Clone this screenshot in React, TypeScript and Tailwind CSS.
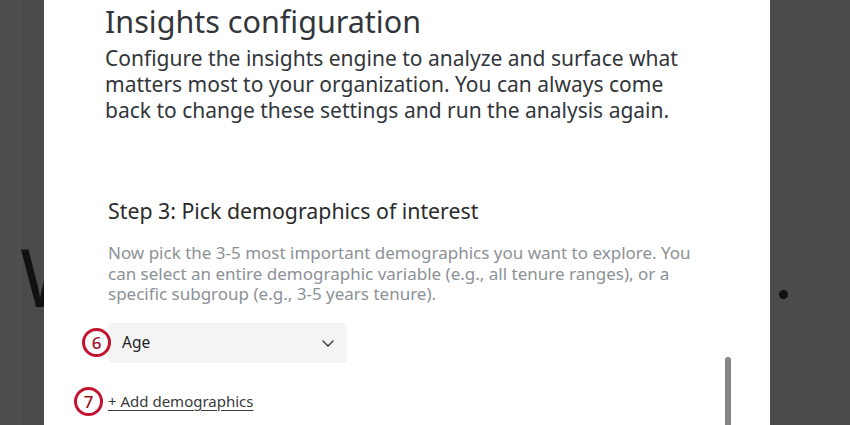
import React from "react";

function Badge({ n }: { n: string }) {
  return (
    <span className="relative z-10 flex h-[29px] w-[29px] shrink-0 items-center justify-center rounded-full border-[3px] border-[#c3142f] bg-white text-[17px] font-medium leading-none text-[#a0102a]">
      {n}
    </span>
  );
}

export default function App() {
  return (
    <div
      className="relative h-[425px] w-[850px] overflow-hidden bg-[#4b4b4b]"
      style={{ fontFamily: '"Noto Sans", "Open Sans", sans-serif' }}
    >
      <div className="absolute left-0 top-0 h-full w-[22px] bg-[#4e4e4e]" />
      <span className="absolute left-[20px] top-[236px] text-[80px] font-normal leading-none text-[#111]">
        W
      </span>
      <span className="absolute left-[779px] top-[290px] h-[9px] w-[9px] rounded-full bg-[#111]" />

      <div className="absolute left-[44px] top-0 flex h-[425px] w-[726px] flex-col bg-white">
        <div className="pl-[61px] pr-[60px] pt-[2px]">
          <h1 className="text-[30.5px] leading-[38px] text-[#32363a]">Insights configuration</h1>
          <p className="mt-[5px] text-[21px] leading-[26px] text-[#32363a]">
            Configure the insights engine to analyze and surface what matters most to your
            organization. You can always come back to change these settings and run the analysis
            again.
          </p>
        </div>

        <div className="mt-[75px] pl-[64px] pr-[70px]">
          <h2 className="text-[21.3px] leading-[26px] text-[#2b2b2b]">
            Step 3: Pick demographics of interest
          </h2>
          <p className="mt-[19px] text-[17px] leading-[20.5px] text-[#8c9196]">
            Now pick the 3-5 most important demographics you want to explore. You can select an
            entire demographic variable (e.g., all tenure ranges), or a specific subgroup (e.g.,
            3-5 years tenure).
          </p>
        </div>

        <div className="mt-[18px] flex items-center pl-[38px]">
          <Badge n="6" />
          <div className="ml-[-3px] flex h-[40px] w-[239px] items-center justify-between rounded-[5px] bg-[#f4f4f4] pl-[14px] pr-[12px]">
            <span className="text-[15.5px] text-[#1f1f1f]">Age</span>
            <svg width="14" height="14" viewBox="0 0 14 14" fill="none">
              <path d="M2 5l5 5 5-5" stroke="#333" strokeWidth="1.4" strokeLinecap="round" strokeLinejoin="round" />
            </svg>
          </div>
        </div>

        <div className="mt-[24px] flex items-center pl-[30px]">
          <Badge n="7" />
          <a className="ml-[5px] text-[15px] text-[#3a3a3a] underline underline-offset-[3px]">
            + Add demographics
          </a>
        </div>

        <div className="absolute left-[681px] top-[357px] h-[80px] w-[6px] rounded-full bg-[#858585]" />
      </div>
    </div>
  );
}
